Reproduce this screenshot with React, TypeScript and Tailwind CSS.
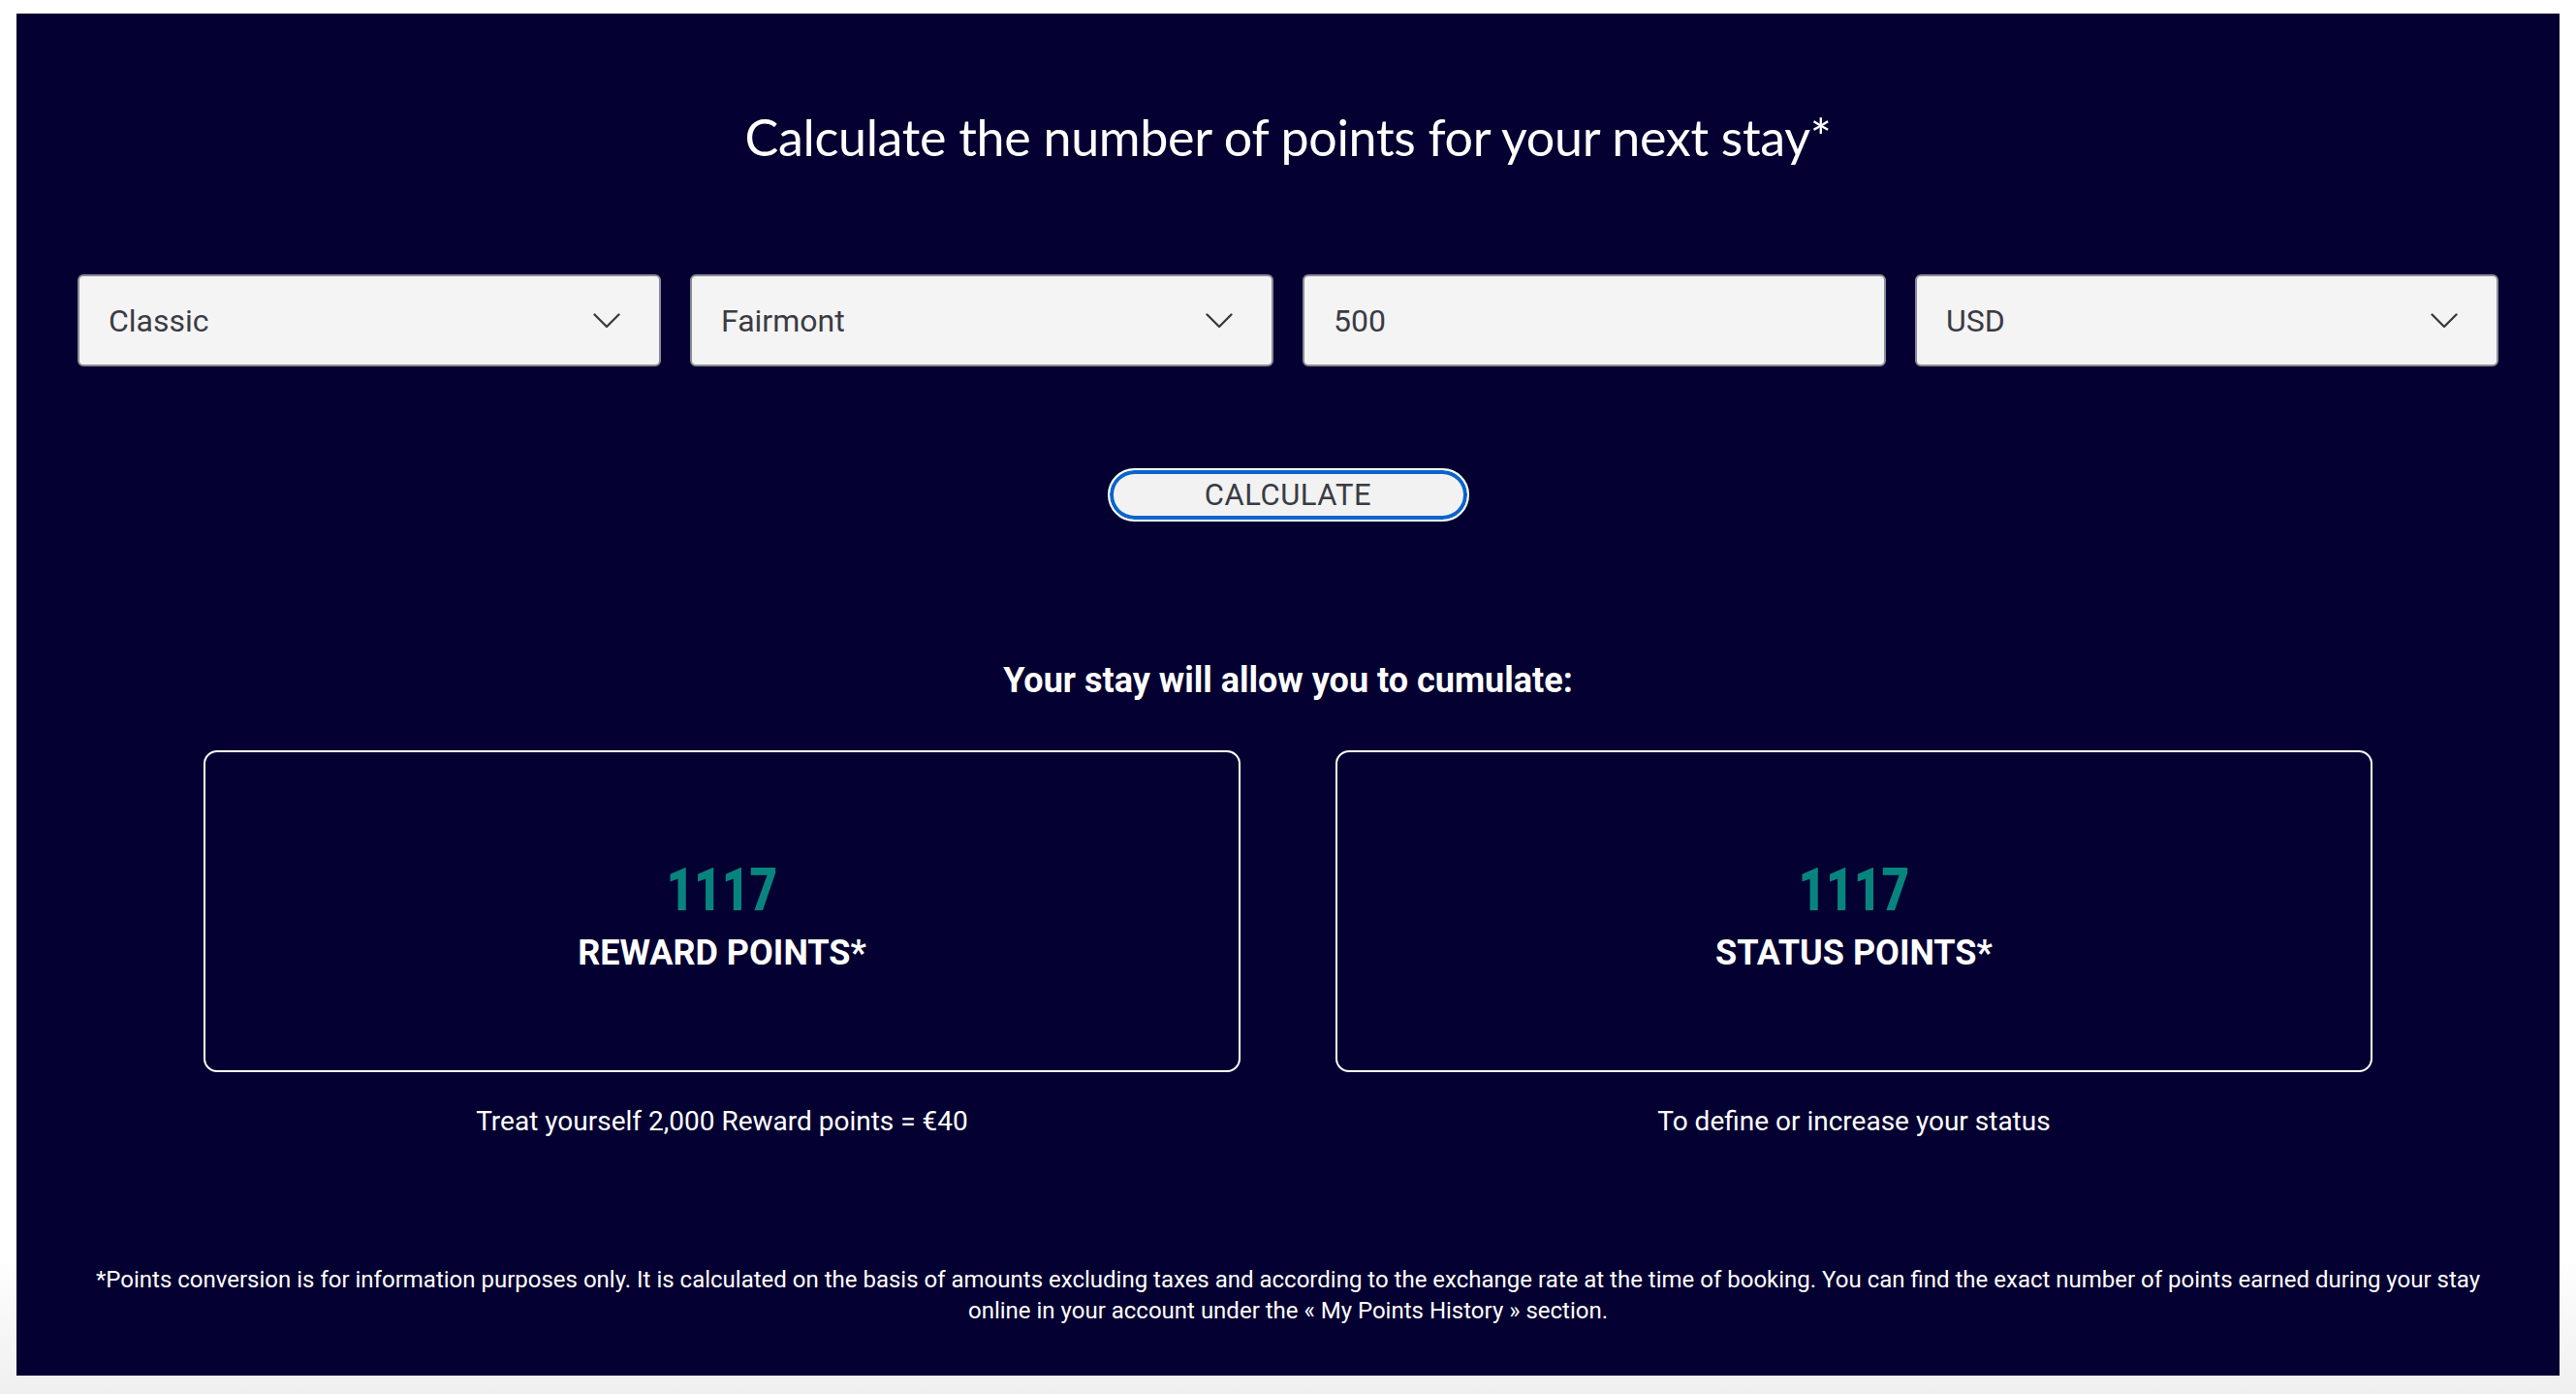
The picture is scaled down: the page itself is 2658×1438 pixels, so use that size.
import { useState } from 'react';

const fields = [
  { id: 'tier', value: 'Classic', select: true },
  { id: 'brand', value: 'Fairmont', select: true },
  { id: 'amount', value: '500', select: false },
  { id: 'currency', value: 'USD', select: true },
];

function Chevron() {
  return (
    <svg width="28" height="16" viewBox="0 0 28 16" fill="none" className="shrink-0">
      <polyline points="1.5,1.5 14,14 26.5,1.5" stroke="#3b3b45" strokeWidth="2.4" strokeLinecap="round" strokeLinejoin="round" />
    </svg>
  );
}

function ResultCard({ points, label, caption }: { points: number; label: string; caption: string }) {
  return (
    <div className="flex flex-col items-center">
      <div className="w-full h-[332px] rounded-[14px] border-2 border-white flex flex-col items-center justify-center pt-3">
        <span className="inline-block scale-x-80 text-[62px] leading-[60px] font-black text-[#08847e]">
          {points}
        </span>
        <span className="mt-[14px] text-[36px] leading-[42px] font-bold text-white">{label}</span>
      </div>
      <p className="mt-[34px] text-[28px] leading-[33px] text-white">{caption}</p>
    </div>
  );
}

export default function App() {
  const [amount, setAmount] = useState('500');

  return (
    <div className="min-h-screen bg-gradient-to-b from-white from-90% to-[#efefef] pt-[14px] px-[17px] pb-[20px] font-['Roboto',sans-serif]">
      <section className="bg-[#040031] px-[63px] pt-[95px] pb-[51px]">
        <h1 className="text-center text-white text-[52px] leading-[64px] tracking-[-0.3px] font-['Lato',sans-serif] font-normal">
          Calculate the number of points for your next stay*
        </h1>

        {/* Form */}
        <div className="mt-[110px] grid grid-cols-4 gap-[30px]">
          {fields.map((f) =>
            f.select ? (
              <div
                key={f.id}
                className="h-[95px] rounded-[6px] border-2 border-[#8b8b96] bg-[#f4f4f4] pl-[30px] pr-[40px] flex items-center justify-between"
              >
                <span className="text-[32px] text-[#3b3b45]">{f.value}</span>
                <Chevron />
              </div>
            ) : (
              <input
                key={f.id}
                type="text"
                value={amount}
                onChange={(e) => setAmount(e.target.value)}
                className="h-[95px] w-full rounded-[6px] border-2 border-[#8b8b96] bg-[#f4f4f4] px-[30px] text-[32px] text-[#3b3b45] outline-none"
              />
            )
          )}
        </div>

        <div className="mt-[105px] flex justify-center">
          <button className="w-[373px] h-[55px] rounded-full border-2 border-white bg-[#f2f2f2] shadow-[inset_0_0_0_4px_#0a64cc] text-[31px] leading-none text-[#3b3b45] tracking-[0.5px]">
            CALCULATE
          </button>
        </div>

        {/* Results */}
        <h2 className="mt-[143px] text-center text-[36px] leading-[42px] font-bold text-white">
          Your stay will allow you to cumulate:
        </h2>

        <div className="mt-[51px] mx-auto w-[2238px] grid grid-cols-2 gap-[98px]">
          <ResultCard points={1117} label="REWARD POINTS*" caption="Treat yourself 2,000 Reward points = €40" />
          <ResultCard points={1117} label="STATUS POINTS*" caption="To define or increase your status" />
        </div>

        <p className="mt-[131px] text-center text-[24px] leading-[32px] text-white">
          *Points conversion is for information purposes only. It is calculated on the basis of amounts excluding taxes and
          according to the exchange rate at the time of booking. You can find the exact number of points earned during your stay
          <br />
          online in your account under the « My Points History » section.
        </p>
      </section>
    </div>
  );
}
